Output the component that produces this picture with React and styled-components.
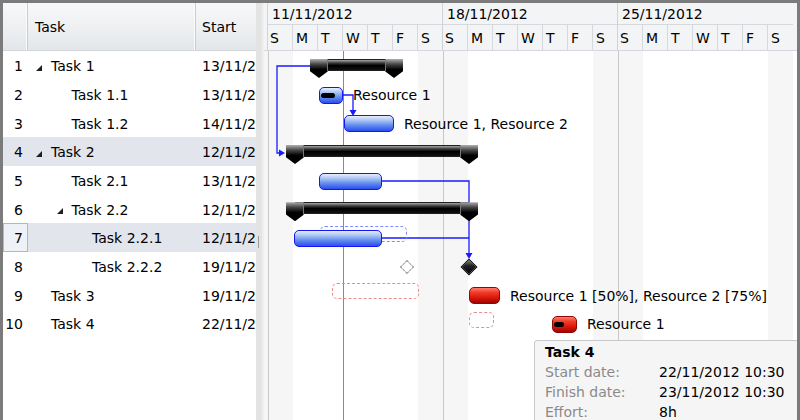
import React from 'react'
import styled, { createGlobalStyle, css } from 'styled-components'

const DAY = 25
const ROW_H = 86 / 3
const CHART_W = 533
const CHART_H = 369

const GlobalStyle = createGlobalStyle`
    body {
        margin: 0;
        font-family: "DejaVu Sans", "Liberation Sans", sans-serif;
        font-size: 14px;
        color: #000;
        background: #fff;
    }
`

const Frame = styled.div`
    position: relative;
    width: 800px;
    height: 420px;
    box-sizing: border-box;
    border: 3px solid #7b7b7b;
    border-bottom: 0;
    display: flex;
    overflow: hidden;
    background: #fff;
`

/* ---------- left grid ---------- */

const LeftPane = styled.div`
    width: 253px;
    display: flex;
    flex-direction: column;
    overflow: hidden;
`

const gridCols = css`
    display: grid;
    grid-template-columns: 25px 168px 60px;
`

const GridHeader = styled.div`
    ${gridCols};
    height: 48px;
    box-sizing: border-box;
    border-bottom: 1px solid #d3d6da;
    background: linear-gradient(to bottom, #f7f8f9 0%, #eef0f2 50%, #e3e6e9 100%);
`

const HeadCell = styled.div`
    display: flex;
    align-items: center;
    padding-left: ${p => (p.$pad ? p.$pad : 0)}px;
    padding-top: 1px;
    border-right: 1px solid #c9cdd2;
    box-shadow: inset -1px 0 0 #fafbfc;
    white-space: nowrap;
    overflow: hidden;
    &:last-child {
        border-right: 0;
        box-shadow: none;
    }
`

const GridRow = styled.div`
    ${gridCols};
    height: ${ROW_H}px;
    background: ${p => (p.$selected ? '#e2e6ec' : 'transparent')};
`

const NumCell = styled.div`
    display: flex;
    align-items: center;
    justify-content: flex-end;
    padding: 2px 5px 0 0;
    box-sizing: border-box;
    ${p =>
        p.$focus &&
        css`
            border: 1px solid #86c9dc;
            background: #eef1f5;
            padding: 1px 4px 0 0;
        `};
`

const TaskCell = styled.div`
    display: flex;
    align-items: center;
    padding-left: ${p => 7 + p.$level * 20.5}px;
    padding-top: 2px;
    white-space: nowrap;
`

const Expander = styled.span`
    width: 16px;
    flex: none;
    display: flex;
    align-items: center;
    padding-top: 3px;

    &::before {
        content: '';
        display: ${p => (p.$open ? 'block' : 'none')};
        width: 0;
        height: 0;
        margin-left: 1px;
        border-left: 6px solid transparent;
        border-bottom: 6px solid #1e1e1e;
    }
`

const StartCell = styled.div`
    display: flex;
    align-items: center;
    padding: 2px 0 0 6px;
    white-space: nowrap;
    overflow: hidden;
`

const Splitter = styled.div`
    width: 8px;
    flex: none;
    display: flex;
    align-items: flex-start;
    justify-content: center;
    background: #e4e4e4;
    border-right: 2px solid #efefef;
    box-sizing: border-box;
    padding-top: 233px;

    &::before {
        content: '';
        width: 1px;
        height: 12px;
        margin-left: -2px;
        background: #9a9a9a;
    }
`

/* ---------- gantt ---------- */

const GanttPane = styled.div`
    flex: 1;
    display: flex;
    flex-direction: column;
    overflow: hidden;
`

const TimeHeader = styled.div`
    height: 48px;
    box-sizing: border-box;
    background: #f3f4f6;
    border-bottom: 1px solid #d5d8dc;
    display: flex;
`

const Edge = styled.div`
    width: 4px;
    flex: none;
    background: ${p => (p.$pale ? '#f5f5f5' : 'transparent')};
`

const Week = styled.div`
    width: ${7 * DAY}px;
    flex: none;
    display: flex;
    flex-direction: column;
    border-left: 1px solid #cfd2d6;
    margin-left: -1px;
`

const WeekTitle = styled.div`
    height: 22px;
    display: flex;
    align-items: center;
    padding: 1px 0 0 4px;
    box-sizing: border-box;
    border-bottom: 1px solid #d5d8dc;
    white-space: nowrap;
`

const DayRow = styled.div`
    flex: 1;
    display: flex;
`

const DayLetter = styled.div`
    width: ${DAY}px;
    box-sizing: border-box;
    display: flex;
    align-items: center;
    padding: 1px 0 0 3px;
    border-left: 1px solid #d5d8dc;
    &:first-child {
        border-left: 0;
        padding-left: 2px;
        width: ${DAY - 1}px;
    }
`

const ChartBody = styled.div`
    display: grid;
    width: ${CHART_W}px;
    height: ${CHART_H}px;
    & > * {
        grid-area: 1 / 1;
    }
`

const DayStrip = styled.div`
    display: flex;
`

const DayColumn = styled.div`
    width: ${DAY}px;
    flex: none;
    box-sizing: border-box;
    background: ${p => (p.$weekend ? '#f6f6f6' : '#fff')};
    ${p =>
        p.$weekStart &&
        css`
            border-left: 1px solid #c8c8c8;
        `};
    ${p =>
        p.$today &&
        css`
            border-left: 1px solid #8a8a8a;
        `};
`

const RowsLayer = styled.div`
    display: flex;
    flex-direction: column;
`

const GanttRow = styled.div`
    position: relative;
    height: ${ROW_H}px;
    flex: none;
`

const barColors = {
    blue: css`
        border: 1px solid #1515f5;
        background: linear-gradient(to bottom, #e6efff 0%, #a9c4f4 30%, #6690ee 60%, #2a4cf2 100%);
    `,
    red: css`
        border: 1px solid #8e0606;
        background: linear-gradient(to bottom, #ff7d6e 0%, #f23a28 30%, #d8180a 65%, #a00202 100%);
    `,
}

const Bar = styled.div`
    position: absolute;
    top: 7px;
    height: 17px;
    box-sizing: border-box;
    border-radius: 5px;
    ${p => barColors[p.$color]};
`

const Progress = styled.div`
    position: absolute;
    left: 1px;
    top: 5px;
    height: 5px;
    border-radius: 3px;
    background: #000;
`

const Baseline = styled.div`
    position: absolute;
    top: 3px;
    height: 16px;
    box-sizing: border-box;
    border-radius: 5px;
    border: 1px dashed ${p => (p.$color === 'red' ? '#e58c8c' : '#7f8cff')};
`

const BarLabel = styled.div`
    position: absolute;
    top: 0;
    height: 100%;
    padding-top: 2px;
    box-sizing: border-box;
    display: flex;
    align-items: center;
    white-space: nowrap;
`

const SummaryBody = styled.div`
    position: absolute;
    top: 8px;
    height: 12px;
    box-sizing: border-box;
    border: 1px solid #202020;
    background: linear-gradient(to bottom, #a8a8a8 0%, #3a3a3a 30%, #000 55%, #111 100%);
`

const SummaryCap = styled.div`
    position: absolute;
    top: 8px;
    width: 18px;
    height: 19px;
    background: linear-gradient(to bottom, #b0b0b0 0%, #444 28%, #000 55%, #000 100%);
    clip-path: polygon(0 0, 100% 0, 100% 64%, 50% 100%, 0 64%);

    &::after {
        content: '';
        position: absolute;
        inset: 0 auto 0 ${p => (p.$side === 'left' ? 'calc(100% - 1px)' : '0')};
        width: 1px;
        background: #777;
    }
`

const Diamond = styled.div`
    position: absolute;
    top: 50%;
    transform: rotate(45deg);
    box-sizing: border-box;
    ${p =>
        p.$ghost
            ? css`
                  border: 1px dashed #9a9a9a;
                  width: 10px;
                  height: 10px;
                  margin-left: -5px;
                  margin-top: -4px;
              `
            : css`
                  width: 12px;
                  height: 12px;
                  margin-left: -6px;
                  margin-top: -5px;
                  background: linear-gradient(135deg, #8a8a8a 0%, #222 40%, #000 100%);
                  border: 1px solid #000;
              `};
`

const LinkSvg = styled.svg`
    pointer-events: none;
`

const Tooltip = styled.div`
    position: absolute;
    left: 531px;
    top: 337px;
    width: 280px;
    height: 100px;
    box-sizing: border-box;
    padding: 1px 10px;
    background: #f5f5f6;
    border: 1px solid #c6cace;
    border-radius: 3px;
    line-height: 20px;
`

const TipTitle = styled.div`
    font-weight: bold;
`

const TipGrid = styled.div`
    display: grid;
    grid-template-columns: 114px auto;
    white-space: nowrap;
`

const TipLabel = styled.span`
    color: #8a8a8a;
`

/* ---------- data ---------- */

const tasks = [
    { n: 1, name: 'Task 1', level: 0, open: true, start: '13/11/2012' },
    { n: 2, name: 'Task 1.1', level: 1, start: '13/11/2012' },
    { n: 3, name: 'Task 1.2', level: 1, start: '14/11/2012' },
    { n: 4, name: 'Task 2', level: 0, open: true, start: '12/11/2012', selected: true },
    { n: 5, name: 'Task 2.1', level: 1, start: '13/11/2012' },
    { n: 6, name: 'Task 2.2', level: 1, open: true, start: '12/11/2012' },
    { n: 7, name: 'Task 2.2.1', level: 2, start: '12/11/2012', selected: true, focus: true },
    { n: 8, name: 'Task 2.2.2', level: 2, start: '19/11/2012' },
    { n: 9, name: 'Task 3', level: 0, start: '19/11/2012' },
    { n: 10, name: 'Task 4', level: 0, start: '22/11/2012' },
]

// x positions are in chart pixels (day 0 = Sun 11/11 starts at x = 4)
const items = [
    { kind: 'summary', x: 46, w: 93 },
    { kind: 'task', color: 'blue', x: 55, w: 24, progress: 14, label: 'Resource 1' },
    { kind: 'task', color: 'blue', x: 80, w: 50, label: 'Resource 1, Resource 2' },
    { kind: 'summary', x: 22, w: 192 },
    { kind: 'task', color: 'blue', x: 55, w: 63 },
    { kind: 'summary', x: 22, w: 192 },
    { kind: 'task', color: 'blue', x: 30, w: 88, baseline: { x: 56, w: 87 } },
    { kind: 'milestone', x: 205, ghost: 143 },
    {
        kind: 'task',
        color: 'red',
        x: 205,
        w: 31,
        baseline: { x: 68, w: 87 },
        label: 'Resource 1 [50%], Resource 2 [75%]',
    },
    {
        kind: 'task',
        color: 'red',
        x: 288,
        w: 25,
        progress: 10,
        baseline: { x: 205, w: 25 },
        label: 'Resource 1',
    },
]

const links = [
    { pts: '46,15 13,15 13,102 16,102', arrow: 'right', at: [21, 102] },
    { pts: '79,44 89,44 89,59', arrow: 'down', at: [89, 65] },
    { pts: '118,130 205,130 205,202', arrow: 'down', at: [205, 208] },
    { pts: '118,187 205,187' },
]

const weeks = ['11/11/2012', '18/11/2012', '25/11/2012']
const letters = ['S', 'M', 'T', 'W', 'T', 'F', 'S']

const Arrow = ({ dir, at }) => {
    const [x, y] = at
    const d =
        dir === 'right'
            ? `M${x},${y} L${x - 6},${y - 3.5} L${x - 6},${y + 3.5} Z`
            : `M${x},${y} L${x - 3.5},${y - 6} L${x + 3.5},${y - 6} Z`
    return <path d={d} fill="#1a1aff" />
}

const ChartItem = ({ item }) => {
    if (item.kind === 'summary') {
        return (
            <>
                <SummaryBody style={{ left: item.x + 9, width: item.w - 18 }} />
                <SummaryCap $side="left" style={{ left: item.x }} />
                <SummaryCap $side="right" style={{ left: item.x + item.w - 18 }} />
            </>
        )
    }
    if (item.kind === 'milestone') {
        return (
            <>
                <Diamond $ghost style={{ left: item.ghost }} />
                <Diamond style={{ left: item.x }} />
            </>
        )
    }
    return (
        <>
            {item.baseline && (
                <Baseline
                    $color={item.color}
                    style={{ left: item.baseline.x, width: item.baseline.w }}
                />
            )}
            <Bar $color={item.color} style={{ left: item.x, width: item.w }}>
                {item.progress && <Progress style={{ width: item.progress }} />}
            </Bar>
            {item.label && <BarLabel style={{ left: item.x + item.w + 10 }}>{item.label}</BarLabel>}
        </>
    )
}

const App = () => {
    const days = Array.from({ length: 21 }, (_, i) => i)

    return (
        <>
            <GlobalStyle />
            <Frame>
                <LeftPane>
                    <GridHeader>
                        <HeadCell />
                        <HeadCell $pad={7}>Task</HeadCell>
                        <HeadCell $pad={6}>Start</HeadCell>
                    </GridHeader>
                    {tasks.map(t => (
                        <GridRow key={t.n} $selected={t.selected}>
                            <NumCell $focus={t.focus}>{t.n}</NumCell>
                            <TaskCell $level={t.level}>
                                <Expander $open={t.open} />
                                {t.name}
                            </TaskCell>
                            <StartCell>{t.start}</StartCell>
                        </GridRow>
                    ))}
                </LeftPane>

                <Splitter />

                <GanttPane>
                    <TimeHeader>
                        <Edge />
                        {weeks.map(w => (
                            <Week key={w}>
                                <WeekTitle>{w}</WeekTitle>
                                <DayRow>
                                    {letters.map((l, i) => (
                                        <DayLetter key={i}>{l}</DayLetter>
                                    ))}
                                </DayRow>
                            </Week>
                        ))}
                        <Edge />
                    </TimeHeader>

                    <ChartBody>
                        <DayStrip>
                            <Edge $pale />
                            {days.map(d => (
                                <DayColumn
                                    key={d}
                                    $weekend={d % 7 === 0 || d % 7 === 6}
                                    $weekStart={d % 7 === 0}
                                    $today={d === 3}
                                />
                            ))}
                            <Edge />
                        </DayStrip>

                        <RowsLayer>
                            {items.map((item, i) => (
                                <GanttRow key={i}>
                                    <ChartItem item={item} />
                                </GanttRow>
                            ))}
                        </RowsLayer>

                        <LinkSvg width={CHART_W} height={CHART_H}>
                            {links.map((l, i) => (
                                <g key={i}>
                                    <polyline
                                        points={l.pts}
                                        fill="none"
                                        stroke="#1a1aff"
                                        strokeWidth="1.3"
                                    />
                                    {l.arrow && <Arrow dir={l.arrow} at={l.at} />}
                                </g>
                            ))}
                        </LinkSvg>
                    </ChartBody>
                </GanttPane>

                <Tooltip>
                    <TipTitle>Task 4</TipTitle>
                    <TipGrid>
                        <TipLabel>Start date:</TipLabel>
                        <span>22/11/2012 10:30</span>
                        <TipLabel>Finish date:</TipLabel>
                        <span>23/11/2012 10:30</span>
                        <TipLabel>Effort:</TipLabel>
                        <span>8h</span>
                    </TipGrid>
                </Tooltip>
            </Frame>
        </>
    )
}

export default App
